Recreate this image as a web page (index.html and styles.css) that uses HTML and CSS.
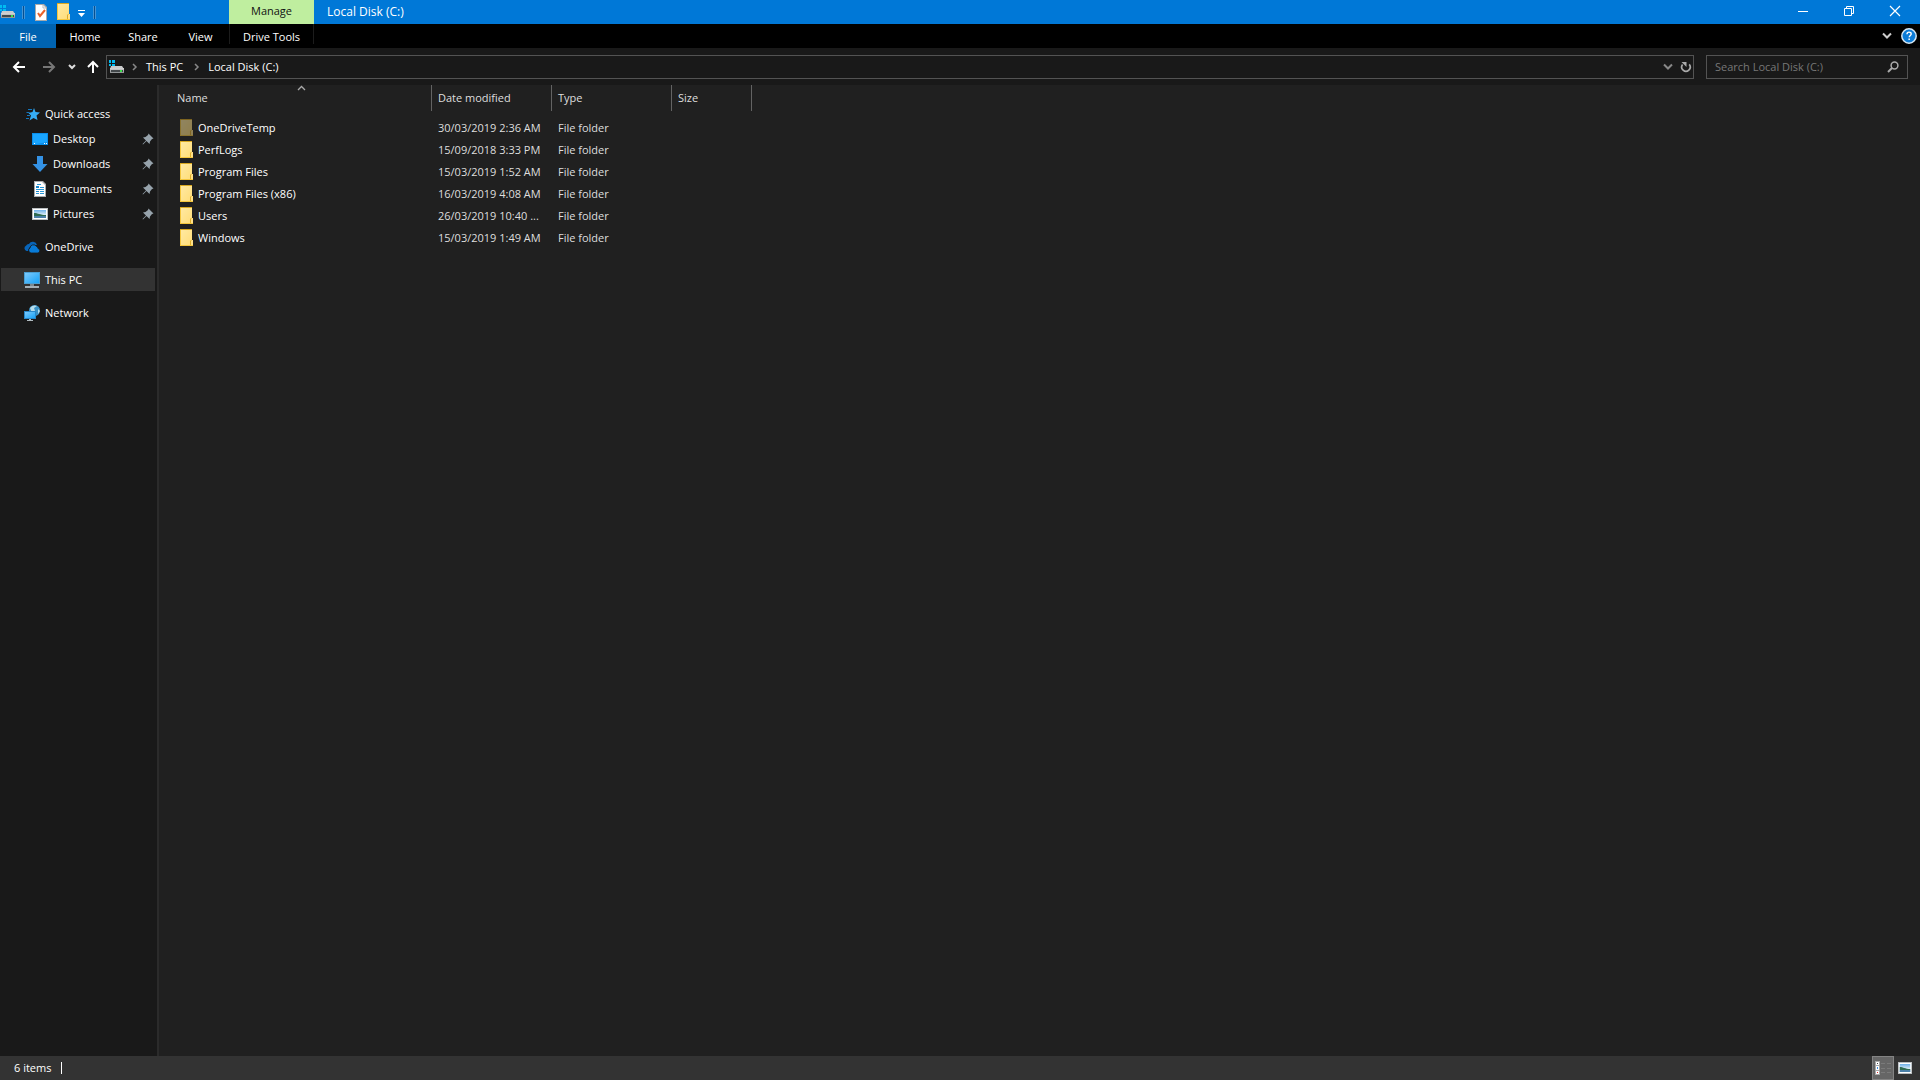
FILE: index.html
```html
<!DOCTYPE html>
<html lang="en">
<head>
<meta charset="utf-8">
<title>Local Disk (C:)</title>
<link rel="stylesheet" href="styles.css">
</head>
<body>
<svg class="defs" aria-hidden="true">
  <defs>
    <linearGradient id="blue" x1="0" y1="0" x2="1" y2="1"><stop offset="0" stop-color="#7cc9fb"/><stop offset="1" stop-color="#17a3f8"/></linearGradient>
    <linearGradient id="steel" x1="0" y1="0" x2="0" y2="1"><stop offset="0" stop-color="#d8d8d8"/><stop offset="1" stop-color="#8b8e90"/></linearGradient>
    <linearGradient id="paper" x1="0" y1="0" x2="1" y2="1"><stop offset="0" stop-color="#ffe9a2"/><stop offset="1" stop-color="#ffdd78"/></linearGradient>
    <linearGradient id="sky" x1="0" y1="0" x2="0" y2="1"><stop offset="0" stop-color="#6fb1ea"/><stop offset="0.6" stop-color="#dcecf5"/><stop offset="1" stop-color="#4f86ad"/></linearGradient>
  </defs>
  <symbol id="drive" viewBox="0 0 16 16">
    <path d="M4 7h9l2 3H1l1-3z" fill="#c9cbcc"/><path d="M1 9h14v5H1z" fill="url(#steel)"/><path d="M2 11h12v2H2z" fill="#43484b"/><path d="M11 11h2v2h-2z" fill="#3fe04c"/>
    <path d="M0 1h2v3H0zM3 1h3v3H3zM0 5h2v2H0zM3 5h3v2H3z" fill="#00bcf2"/>
  </symbol>
  <symbol id="folder" viewBox="0 0 14 18">
    <path d="M0 0h12v11h1v6H0z" fill="#d9a821"/><path d="M1 1h11v15H1z" fill="url(#paper)"/><path d="M0 1h1v16H0zM0 16h13v1H0z" fill="#f4c63d"/><path d="M11 11h2v5h-2z" fill="#ffe089"/><path d="M10.500 16v-4l1-1" fill="none" stroke="#dfae2a"/>
  </symbol>
  <symbol id="pin" viewBox="0 0 12 12">
    <path d="M6.500 0.500 11.500 5.500 10 6 8 8.500 7.500 11 4.500 8 1 11.500 0.500 11 4 7.500 1 4.500 3.500 4 6 2z" fill="#97a3ac"/>
  </symbol>
  <symbol id="picture" viewBox="0 0 16 14">
    <path d="M0 1h16v12H0z" fill="#b9bdc0"/><path d="M1 2h14v10H1z" fill="#fff"/><path d="M2 3h12v8H2z" fill="url(#sky)"/><path d="M2 6c4 0 6 2 12 2v1H2z" fill="#2f6b52"/><path d="M2 9h12v2H2z" fill="#4b80a8"/>
  </symbol>
</svg>

<header class="titlebar">
  <div class="quick-tools">
    <svg class="icon drive-small" viewBox="0 0 16 16"><use href="#drive"/></svg>
    <span class="tool-divider"></span>
    <button class="plain tool" aria-label="Properties"><svg width="12" height="17" viewBox="0 0 12 17"><path d="M0 0h9l3 3v14H0z" fill="#aaa"/><path d="M1 1h7l3 3v12H1z" fill="#fff"/><path d="M8 1v3h3" fill="none" stroke="#bbb"/><path d="M3 9l2 3 5-6" fill="none" stroke="#e8622c" stroke-width="2"/></svg></button>
    <button class="plain tool tool-folder" aria-label="New folder"><svg width="14" height="18"><use href="#folder"/></svg></button>
    <button class="plain tool-more" aria-label="Customize toolbar"><svg width="7" height="7" viewBox="0 0 7 7"><path d="M0 0h7v1H0zM0 3h7L3.500 7z" fill="#fff"/></svg></button>
    <span class="tool-divider"></span>
  </div>
  <div class="manage">Manage</div>
  <h1 class="title">Local Disk (C:)</h1>
  <div class="window-buttons">
    <button class="plain" aria-label="Minimize"><svg width="12" height="12" viewBox="0 0 12 12"><path d="M1 6h10v1H1z" fill="#fff"/></svg></button>
    <button class="plain" aria-label="Restore"><svg width="12" height="12" viewBox="0 0 12 12"><path d="M1.500 3.500h7v7h-7zM3.500 3V1.500h7v7H9" fill="none" stroke="#fff"/></svg></button>
    <button class="plain" aria-label="Close"><svg width="12" height="12" viewBox="0 0 12 12"><path d="M1 1l10 10M11 1L1 11" stroke="#fff" stroke-width="1.200"/></svg></button>
  </div>
</header>

<nav class="ribbon" aria-label="Ribbon">
  <button class="plain file-tab">File</button>
  <button class="plain tab">Home</button>
  <button class="plain tab">Share</button>
  <button class="plain tab">View</button>
  <button class="plain drive-tab">Drive Tools</button>
  <div class="ribbon-end">
    <button class="plain" aria-label="Expand ribbon"><svg width="12" height="8" viewBox="0 0 12 8"><path d="M2 1.500l4 4 4-4" fill="none" stroke="#ccc" stroke-width="2"/></svg></button>
    <button class="plain" aria-label="Help"><svg width="16" height="16" viewBox="0 0 16 16"><circle cx="8" cy="8" r="7.200" fill="#0c7cd8" stroke="#d5e6f3" stroke-width="1.500"/><path d="M6 6.300c0-3 4.300-2.700 4.200-.3 0 1.500-2 1.500-2 3.300" fill="none" stroke="#fff" stroke-width="1.400"/><path d="M7.400 10.600h1.500v1.500H7.400z" fill="#fff"/></svg></button>
  </div>
</nav>

<div class="navigation">
  <div class="arrows">
    <button class="plain back" aria-label="Back"><svg width="14" height="14" viewBox="0 0 14 14"><path d="M13 7H2M7 2L2 7l5 5" fill="none" stroke="#fff" stroke-width="2"/></svg></button>
    <button class="plain forward" aria-label="Forward"><svg width="14" height="14" viewBox="0 0 14 14"><path d="M1 7h11M7 2l5 5-5 5" fill="none" stroke="#777" stroke-width="2"/></svg></button>
    <button class="plain recent" aria-label="Recent locations"><svg width="8" height="6" viewBox="0 0 8 6"><path d="M1 1l3 3 3-3" fill="none" stroke="#ddd" stroke-width="2"/></svg></button>
    <button class="plain up" aria-label="Up"><svg width="14" height="14" viewBox="0 0 14 14"><path d="M7 13V2M2 7l5-5 5 5" fill="none" stroke="#fff" stroke-width="2"/></svg></button>
  </div>
  <div class="address">
    <svg class="icon" viewBox="0 0 16 16"><use href="#drive"/></svg>
    <svg class="crumb-arrow" viewBox="0 0 6 8"><path d="M1 1l3 3-3 3" fill="none" stroke="#888" stroke-width="1.500"/></svg>
    <a href="#pc">This PC</a>
    <svg class="crumb-arrow" viewBox="0 0 6 8"><path d="M1 1l3 3-3 3" fill="none" stroke="#888" stroke-width="1.500"/></svg>
    <a href="#disk">Local Disk (C:)</a>
    <div class="address-end">
      <button class="plain" aria-label="Previous locations"><svg width="10" height="8" viewBox="0 0 10 8"><path d="M1 1.500l4 4 4-4" fill="none" stroke="#888" stroke-width="2"/></svg></button>
      <button class="plain" aria-label="Refresh"><svg width="12" height="12" viewBox="0 0 12 12"><path d="M2.600 3.500A4.200 4.200 0 1 0 9.200 3.400" fill="none" stroke="#aaa" stroke-width="1.700"/><path d="M1.500 1h5v5L5 4.500z" fill="#aaa"/></svg></button>
    </div>
  </div>
  <label class="search">
    <input type="text" placeholder="Search Local Disk (C:)" aria-label="Search Local Disk (C:)">
    <svg width="12" height="12" viewBox="0 0 12 12"><circle cx="7.500" cy="4.500" r="3.400" fill="none" stroke="#aaa" stroke-width="1.500"/><path d="M5 7L1 11" stroke="#aaa" stroke-width="2"/></svg>
  </label>
</div>

<div class="workspace">
  <aside class="sidebar">
    <div class="group">
      <a class="item" href="#quick"><svg class="icon" viewBox="0 0 16 16"><path d="M10 2l1.500 4 4.500.5-3.500 3 1 4.500-4-2-4 2.500L7 9.500 4.500 7l4-1z" fill="#35adf6"/><path d="M4 3.500h4M2.500 6.500h3M3 9.500h3M2 12.500h3" stroke="#1477bd"/></svg>Quick access</a>
      <a class="item sub" href="#desktop"><svg class="icon" viewBox="0 0 16 16"><path d="M0 2h16v12H0z" fill="#0b8ee9"/><path d="M1 3h14v8L5 13H1z" fill="#19a5ff"/><path d="M2 12h1v1H2zM12 12h1v1h-1zM14 12h1v1h-1z" fill="#fff"/></svg>Desktop<svg class="pin"><use href="#pin"/></svg></a>
      <a class="item sub" href="#downloads"><svg class="icon" viewBox="0 0 16 16"><path d="M5 0h6v8h4.500L8 16 .5 8H5z" fill="#3492e5"/></svg>Downloads<svg class="pin"><use href="#pin"/></svg></a>
      <a class="item sub" href="#documents"><svg class="icon" viewBox="0 0 16 16"><path d="M2 0h9l3 3v13H2z" fill="#a8abad"/><path d="M3 1h7l3 3v11H3z" fill="#fff"/><path d="M5 3.500h4M4 6.500h3M8 6.500h4M4 8.500h8M4 12.500h3M8 10.500h4M8 12.500h4" stroke="#2895d5"/><path d="M4 5h3v2H4zM4 10h3v1H4z" fill="#1685ca"/></svg>Documents<svg class="pin"><use href="#pin"/></svg></a>
      <a class="item sub" href="#pictures"><svg class="icon" viewBox="0 0 16 14"><use href="#picture"/></svg>Pictures<svg class="pin"><use href="#pin"/></svg></a>
    </div>
    <a class="item" href="#onedrive"><svg class="icon" viewBox="0 0 16 16"><path d="M4 12H2.500A2.800 2.800 0 0 1 2 6.800 3 3 0 0 1 5 5a4.300 4.300 0 0 1 8 1L8.500 6 5 9z" fill="#0864b8"/><path d="M7 14a2.700 2.700 0 0 1-1-5 3.500 3.500 0 0 1 6.500-1.500 3 3 0 0 1 1.500 2 2.300 2.300 0 0 1 0 4.500z" fill="#087bd8" stroke="#191919" stroke-width=".8"/></svg>OneDrive</a>
    <a class="item selected" href="#pc" aria-current="true"><svg class="icon" viewBox="0 0 16 16"><path d="M0 0h16v12H0z" fill="#4b9fd2"/><path d="M1 1h14v10H1z" fill="url(#blue)"/><path d="M6 12h4v2H6z" fill="#7b8991"/><path d="M1 14h14v2H1z" fill="#a4b0b7"/></svg>This PC</a>
    <a class="item" href="#network"><svg class="icon" viewBox="0 0 16 16"><circle cx="10.500" cy="5.500" r="5.500" fill="#3a91c5"/><path d="M6 3c2-3 6-3 7-2l-3 2 1 3-3 2zM14 4l2 2-2 3z" fill="#b6dcea"/><path d="M0 6h12v8H0z" fill="#2787c9"/><path d="M1 7h10v6H1z" fill="url(#blue)"/><path d="M5 14h2v1h2v1H3v-1h2z" fill="#b1bbc0"/></svg>Network</a>
  </aside>
  <main class="content">
    <table class="files">
      <colgroup><col class="col-name"><col class="col-wide"><col class="col-wide"><col class="col-size"></colgroup>
      <thead>
        <tr><th scope="col" aria-sort="ascending">Name<svg class="sort" width="9" height="6" viewBox="0 0 9 6"><path d="M1 5l3.500-3.500L8 5" fill="none" stroke="#aaa" stroke-width="1.300"/></svg></th><th scope="col">Date modified</th><th scope="col">Type</th><th scope="col">Size</th></tr>
      </thead>
      <tbody>
        <tr><td class="hidden-item"><svg class="folder"><use href="#folder"/></svg>OneDriveTemp</td><td>30/03/2019 2:36 AM</td><td>File folder</td><td></td></tr>
        <tr><td><svg class="folder"><use href="#folder"/></svg>PerfLogs</td><td>15/09/2018 3:33 PM</td><td>File folder</td><td></td></tr>
        <tr><td><svg class="folder"><use href="#folder"/></svg>Program Files</td><td>15/03/2019 1:52 AM</td><td>File folder</td><td></td></tr>
        <tr><td><svg class="folder"><use href="#folder"/></svg>Program Files (x86)</td><td>16/03/2019 4:08 AM</td><td>File folder</td><td></td></tr>
        <tr><td><svg class="folder"><use href="#folder"/></svg>Users</td><td>26/03/2019 10:40 ...</td><td>File folder</td><td></td></tr>
        <tr><td><svg class="folder"><use href="#folder"/></svg>Windows</td><td>15/03/2019 1:49 AM</td><td>File folder</td><td></td></tr>
      </tbody>
    </table>
  </main>
</div>

<footer class="statusbar">
  <span class="count">6 items</span>
  <div class="views">
    <button class="plain view active" aria-label="Details view" aria-pressed="true"><svg width="18" height="14" viewBox="0 0 18 14"><path d="M1 0h5v14H1z" fill="#a9a9a9"/><path d="M2 1h3v3H2zM2 5h3v4H2zM2 10h3v3H2z" fill="#fff"/><path d="M3 2h1v1H3z" fill="#444"/><path d="M3 6h1v2H3z" fill="#3f8ee0"/><path d="M3 11h1v1H3z" fill="#e02b2b"/><path d="M7 2.500h4M13 2.500h4M7 7.500h4M13 7.500h4M7 11.500h4M13 11.500h4" stroke="#7a7a7a"/></svg></button>
    <button class="plain view" aria-label="Large icons view"><svg width="14" height="12" viewBox="0 1 16 12" preserveAspectRatio="none"><use href="#picture" width="16" height="14"/></svg></button>
  </div>
</footer>
</body>
</html>
```
FILE: styles.css
```css
* { box-sizing: border-box; }
body {
  margin: 0;
  min-height: 100vh;
  display: flex;
  flex-direction: column;
  background: #202020;
  color: #fff;
  font: 11px/16px "Open Sans", "Noto Sans", sans-serif;
}
a { color: inherit; text-decoration: none; }
svg { display: block; flex: none; }
.defs { position: absolute; width: 0; height: 0; }
.plain {
  display: flex;
  align-items: center;
  justify-content: center;
  border: 0;
  padding: 0;
  background: none;
  color: inherit;
  font: inherit;
}
.icon { width: 16px; height: 16px; }

/* Title bar */
.titlebar { display: flex; height: 24px; background: #0078d7; }
.quick-tools { display: flex; align-items: center; width: 229px; }
.drive-small { margin-right: 6px; }
.tool-divider { width: 3px; height: 13px; background: #064f91; border: solid #4594d4; border-width: 0 1px; }
.tool { margin-left: 10px; }
.tool-more { margin: 0 8px 0 7px; padding-top: 2px; }
.manage { width: 85px; padding-top: 3px; background: #bfee9f; color: #111; text-align: center; }
.title { margin: 0; padding: 4px 13px 0; font: inherit; font-size: 12px; }
.window-buttons { display: flex; margin-left: auto; }
.window-buttons .plain { width: 46px; height: 22px; }
.window-buttons .plain:last-child { margin-right: 2px; }

/* Ribbon */
.ribbon { display: flex; height: 24px; background: #000; }
.file-tab { width: 56px; background: #0063b1; }
.file-tab, .tab { padding-top: 1px; }
.tab { width: 58px; }
.tab:nth-child(4) { width: 57px; }
.drive-tab { width: 85px; height: 20px; padding-top: 5px; border: solid #1c1c1c; border-width: 0 1px; }
.ribbon-end { display: flex; gap: 8px; margin: 0 3px 0 auto; }

/* Navigation */
.navigation { display: flex; align-items: center; height: 37px; padding: 0 12px; background: #191919; }
.arrows { display: flex; width: 94px; align-items: center; }
.forward { margin-left: 16px; }
.recent { margin-left: 12px; }
.up { margin-left: 10px; }
.address { display: flex; flex: 1; align-items: center; height: 24px; padding-left: 2px; border: 1px solid #535353; }
.crumb-arrow { width: 6px; height: 8px; margin: 0 8px 0 11px; }
.icon + .crumb-arrow { margin-left: 7px; }
.address-end { display: flex; gap: 7px; margin: 0 1px 0 auto; }
.search { display: flex; align-items: center; width: 202px; height: 24px; margin-left: 12px; padding: 0 8px; border: 1px solid #535353; }
.search input { flex: 1; min-width: 0; border: 0; padding: 0; background: none; color: #fff; font: inherit; outline: 0; }
.search input::placeholder { color: #777; opacity: 1; }

/* Folder tree and file list */
.workspace { display: flex; flex: 1; }
.sidebar { display: flex; flex-direction: column; gap: 10px; width: 159px; padding: 17px 2px 0 1px; background: #191919; border-right: 2px solid #2b2b2b; }
.group { display: flex; flex-direction: column; gap: 2px; }
.item { display: flex; align-items: center; gap: 5px; height: 23px; padding: 0 1px 0 23px; }
.sub { padding-left: 31px; }
.pin { width: 12px; height: 12px; margin-left: auto; }
.selected { background: #333; }
.content { flex: 1; min-width: 0; }
.files { width: 593px; table-layout: fixed; border-spacing: 0; white-space: nowrap; }
.col-name { width: 273px; }
.col-wide { width: 120px; }
.col-size { width: 80px; }
.files th { position: relative; height: 26px; padding: 0 6px; border-right: 1px solid #636363; color: #dedede; font-weight: 400; text-align: left; }
.files th:first-child { padding-left: 18px; }
.sort { position: absolute; left: 138px; top: 0; }
.files tbody::before { content: ""; display: block; height: 6px; }
.files td { height: 22px; padding: 0 6px; color: #dedede; }
.files td:first-child { display: flex; align-items: center; gap: 4px; padding-left: 21px; color: #fff; }
.folder { width: 14px; height: 18px; }
.hidden-item .folder { opacity: 0.5; }

/* Status bar */
.statusbar { display: flex; align-items: center; height: 24px; background: #333; }
.count { padding-left: 14px; padding-right: 10px; border-right: 1px solid #fff; line-height: 12px; }
.views { display: flex; margin-left: auto; }
.view { width: 22px; height: 24px; }
.view:last-child { width: 26px; padding-right: 4px; }
.active { background: #666; border: 1px solid #838383; }
```
